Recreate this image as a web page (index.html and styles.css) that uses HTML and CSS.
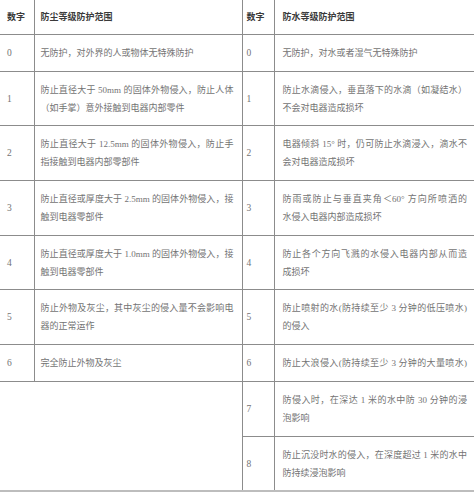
FILE: index.html
```html
<!DOCTYPE html>
<html lang="zh-CN">
<head>
<meta charset="utf-8">
<title>防尘防水等级</title>
<link rel="stylesheet" href="styles.css">
</head>
<body>
<table class="ip">
  <colgroup>
    <col class="c-num">
    <col class="c-dust">
    <col class="c-num2">
    <col class="c-water">
  </colgroup>
  <thead>
    <tr>
      <th class="n1">数字</th>
      <th class="t1">防尘等级防护范围</th>
      <th class="n2">数字</th>
      <th class="t2">防水等级防护范围</th>
    </tr>
  </thead>
  <tbody>
    <tr class="one">
      <td class="n1">0</td>
      <td class="t1">无防护，对外界的人或物体无特殊防护</td>
      <td class="n2">0</td>
      <td class="t2">无防护，对水或者湿气无特殊防护</td>
    </tr>
    <tr>
      <td class="n1">1</td>
      <td class="t1"><span class="ln j">防止直径大于 50mm 的固体外物侵入，防止人体</span><span class="ln">（如手掌）意外接触到电器内部零件</span></td>
      <td class="n2">1</td>
      <td class="t2"><span class="ln j">防止水滴侵入，垂直落下的水滴（如凝结水）</span><span class="ln">不会对电器造成损坏</span></td>
    </tr>
    <tr>
      <td class="n1">2</td>
      <td class="t1"><span class="ln j">防止直径大于 12.5mm 的固体外物侵入，防止手</span><span class="ln">指接触到电器内部零部件</span></td>
      <td class="n2">2</td>
      <td class="t2"><span class="ln j">电器倾斜 15° 时，仍可防止水滴浸入，滴水不</span><span class="ln">会对电器造成损坏</span></td>
    </tr>
    <tr>
      <td class="n1">3</td>
      <td class="t1"><span class="ln j">防止直径或厚度大于 2.5mm 的固体外物侵入，接</span><span class="ln">触到电器零部件</span></td>
      <td class="n2">3</td>
      <td class="t2"><span class="ln j">防雨或防止与垂直夹角＜60° 方向所喷洒的</span><span class="ln">水侵入电器内部造成损坏</span></td>
    </tr>
    <tr>
      <td class="n1">4</td>
      <td class="t1"><span class="ln j">防止直径或厚度大于 1.0mm 的固体外物侵入，接</span><span class="ln">触到电器零部件</span></td>
      <td class="n2">4</td>
      <td class="t2"><span class="ln j">防止各个方向飞溅的水侵入电器内部从而造</span><span class="ln">成损坏</span></td>
    </tr>
    <tr>
      <td class="n1">5</td>
      <td class="t1"><span class="ln j">防止外物及灰尘，其中灰尘的侵入量不会影响电</span><span class="ln">器的正常运作</span></td>
      <td class="n2">5</td>
      <td class="t2"><span class="ln j">防止喷射的水(防持续至少 3 分钟的低压喷水)</span><span class="ln">的侵入</span></td>
    </tr>
    <tr class="one">
      <td class="n1">6</td>
      <td class="t1">完全防止外物及灰尘</td>
      <td class="n2">6</td>
      <td class="t2"><span class="ln j">防止大浪侵入(防持续至少 3 分钟的大量喷水)</span></td>
    </tr>
    <tr>
      <td class="blank" colspan="2" rowspan="2"></td>
      <td class="n2">7</td>
      <td class="t2"><span class="ln j">防侵入时，在深达 1 米的水中防 30 分钟的浸</span><span class="ln">泡影响</span></td>
    </tr>
    <tr class="last">
      <td class="n2">8</td>
      <td class="t2"><span class="ln j">防止沉没时水的侵入，在深度超过 1 米的水中</span><span class="ln">防持续浸泡影响</span></td>
    </tr>
  </tbody>
</table>
</body>
</html>
```

FILE: styles.css
```css
html, body {
  margin: 0;
  padding: 0;
  background: #ffffff;
}

.ip {
  width: 474px;
  border-collapse: collapse;
  table-layout: fixed;
  font-family: "Liberation Serif", "Noto Sans CJK SC", serif;
  font-size: 9px;
  line-height: 18px;
  color: #737373;
}

.c-num { width: 34px; }
.c-dust { width: 208px; }
.c-num2 { width: 32px; }
.c-water { width: 200px; }

.ip th,
.ip td {
  border: 1px solid #8c8c8c;
  padding: 9px 7px 8.7px 7px;
  vertical-align: middle;
  text-align: left;
  font-weight: normal;
}

.ip th {
  padding-top: 8px;
  padding-bottom: 8px;
  font-weight: bold;
  color: #3a3a3a;
  border-top: none;
}

.ln {
  display: block;
  white-space: nowrap;
}

.ln.j {
  text-align: justify;
  text-align-last: justify;
  text-justify: inter-character;
}

.ip .n1 {
  border-left: none;
  padding-left: 7px;
  padding-right: 2px;
  font-size: 9.5px;
}

.ip .n2 {
  padding-left: 4px;
  padding-right: 2px;
  font-size: 9.5px;
}

.ip .t1 {
  padding-left: 6px;
  padding-right: 8px;
}

.ip .t2 {
  border-right: none;
  padding-left: 8px;
  padding-right: 7px;
}

.ip th.n1,
.ip th.n2 {
  font-size: 9px;
}

.ip .blank {
  border-left: none;
  border-bottom: 2px solid #bdbdbd;
}

.ip .last td {
  border-bottom: 2px solid #bdbdbd;
}
```
